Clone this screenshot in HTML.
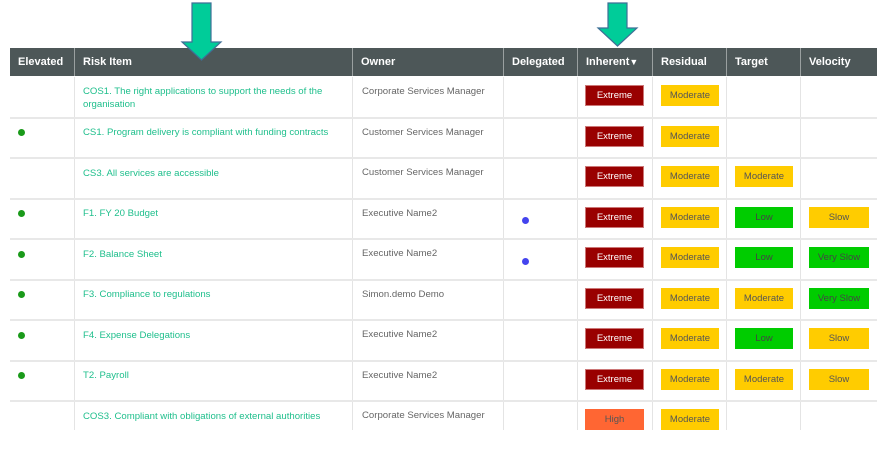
<!DOCTYPE html>
<html><head><meta charset="utf-8"><style>
body{margin:0;width:882px;height:456px;background:#fff;position:relative;overflow:hidden;font-family:"Liberation Sans",sans-serif}
.a{position:absolute}
.hd{position:absolute;top:48px;left:10px;width:867px;height:28px;background:#4d5758}
.hc{position:absolute;top:48px;height:28px;line-height:28px;color:#fff;font-weight:bold;font-size:11px;padding-left:8px;box-sizing:border-box;border-left:1px solid #9aa0a0}
.vl{position:absolute;top:77px;height:353px;width:1px;background:#e4e4e4}
.hl{position:absolute;left:10px;width:867px;height:2px;background:#e8e8e8}
.rt{position:absolute;left:83px;font-size:9.6px;color:#1fbf8c;line-height:13px;width:260px}
.ow{position:absolute;left:362px;font-size:9.6px;color:#666}
.b{position:absolute;height:21px;line-height:22px;text-align:center;font-size:9.5px;box-sizing:border-box}
.ex{background:#990000;color:#fff;width:59px;left:585px;border:1px solid #c77;line-height:19px}
.md{background:#ffcc00;color:#555;width:58px}
.lo{background:#00cc00;color:#444;width:58px}
.hi{background:#ff6633;color:#555;width:59px;left:585px}
.g{position:absolute;left:18px;width:7px;height:7px;border-radius:50%;background:#1a9a1a}
.bl{position:absolute;left:522px;width:7px;height:7px;border-radius:50%;background:#4444ee}
</style></head><body>
<div class="hd"></div>
<div class="hc" style="left:10px;width:64px;border-left:none">Elevated</div>
<div class="hc" style="left:74px;width:278px">Risk Item</div>
<div class="hc" style="left:352px;width:151px">Owner</div>
<div class="hc" style="left:503px;width:74px">Delegated</div>
<div class="hc" style="left:577px;width:75px">Inherent<span style="font-size:9px">▼</span></div>
<div class="hc" style="left:652px;width:74px">Residual</div>
<div class="hc" style="left:726px;width:74px">Target</div>
<div class="hc" style="left:800px;width:77px">Velocity</div>

<div class="vl" style="left:74px"></div><div class="vl" style="left:352px"></div><div class="vl" style="left:503px"></div><div class="vl" style="left:577px"></div><div class="vl" style="left:652px"></div><div class="vl" style="left:726px"></div><div class="vl" style="left:800px"></div>

<div class="hl" style="top:117px"></div><div class="hl" style="top:157px"></div><div class="hl" style="top:198px"></div><div class="hl" style="top:238px"></div><div class="hl" style="top:279px"></div><div class="hl" style="top:319px"></div><div class="hl" style="top:360px"></div><div class="hl" style="top:400px"></div>

<div class="rt" style="top:85px">COS1. The right applications to support the needs of the organisation</div>
<div class="ow" style="top:86px">Corporate Services Manager</div>
<div class="b ex" style="top:85px">Extreme</div><div class="b md" style="top:85px;left:661px">Moderate</div>

<div class="g" style="top:129px"></div>
<div class="rt" style="top:126px">CS1. Program delivery is compliant with funding contracts</div>
<div class="ow" style="top:127px">Customer Services Manager</div>
<div class="b ex" style="top:126px">Extreme</div><div class="b md" style="top:126px;left:661px">Moderate</div>

<div class="rt" style="top:167px">CS3. All services are accessible</div>
<div class="ow" style="top:167px">Customer Services Manager</div>
<div class="b ex" style="top:166px">Extreme</div><div class="b md" style="top:166px;left:661px">Moderate</div><div class="b md" style="top:166px;left:735px">Moderate</div>

<div class="g" style="top:210px"></div>
<div class="rt" style="top:207px">F1. FY 20 Budget</div>
<div class="ow" style="top:208px">Executive Name2</div>
<div class="bl" style="top:217px"></div>
<div class="b ex" style="top:207px">Extreme</div><div class="b md" style="top:207px;left:661px">Moderate</div><div class="b lo" style="top:207px;left:735px">Low</div><div class="b md" style="top:207px;left:809px;width:60px">Slow</div>

<div class="g" style="top:251px"></div>
<div class="rt" style="top:248px">F2. Balance Sheet</div>
<div class="ow" style="top:248px">Executive Name2</div>
<div class="bl" style="top:258px"></div>
<div class="b ex" style="top:247px">Extreme</div><div class="b md" style="top:247px;left:661px">Moderate</div><div class="b lo" style="top:247px;left:735px">Low</div><div class="b lo" style="top:247px;left:809px;width:60px">Very Slow</div>

<div class="g" style="top:291px"></div>
<div class="rt" style="top:288px">F3. Compliance to regulations</div>
<div class="ow" style="top:289px">Simon.demo Demo</div>
<div class="b ex" style="top:288px">Extreme</div><div class="b md" style="top:288px;left:661px">Moderate</div><div class="b md" style="top:288px;left:735px">Moderate</div><div class="b lo" style="top:288px;left:809px;width:60px">Very Slow</div>

<div class="g" style="top:332px"></div>
<div class="rt" style="top:329px">F4. Expense Delegations</div>
<div class="ow" style="top:329px">Executive Name2</div>
<div class="b ex" style="top:328px">Extreme</div><div class="b md" style="top:328px;left:661px">Moderate</div><div class="b lo" style="top:328px;left:735px">Low</div><div class="b md" style="top:328px;left:809px;width:60px">Slow</div>

<div class="g" style="top:372px"></div>
<div class="rt" style="top:369px">T2. Payroll</div>
<div class="ow" style="top:370px">Executive Name2</div>
<div class="b ex" style="top:369px">Extreme</div><div class="b md" style="top:369px;left:661px">Moderate</div><div class="b md" style="top:369px;left:735px">Moderate</div><div class="b md" style="top:369px;left:809px;width:60px">Slow</div>

<div class="rt" style="top:410px">COS3. Compliant with obligations of external authorities</div>
<div class="ow" style="top:410px">Corporate Services Manager</div>
<div class="b hi" style="top:409px">High</div><div class="b md" style="top:409px;left:661px">Moderate</div>
<div class="a" style="left:0;top:431px;width:882px;height:25px;background:#fff"></div>

<svg class="a" style="left:0;top:0" width="882" height="70">
<polygon points="192,3 211,3 211,42 221,42 201.5,60 182,42 192,42" fill="#00cc99" stroke="#3e6f96" stroke-width="1.2"/>
<polygon points="608,3 627,3 627,28 637,28 617.5,46 598,28 608,28" fill="#00cc99" stroke="#3e6f96" stroke-width="1.2"/>
</svg>
</body></html>
